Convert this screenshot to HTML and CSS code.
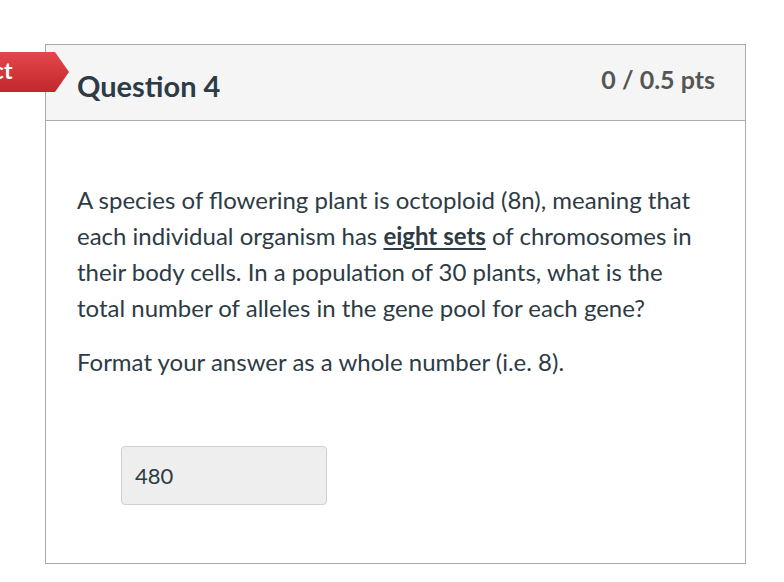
FILE: index.html
```html
<!DOCTYPE html>
<html>
<head>
<meta charset="utf-8">
<link rel="stylesheet" href="styles.css">
</head>
<body>
<div class="page">
  <div class="badge">Incorrect</div>
  <div class="card">
    <div class="card-header">
      <h2 class="title">Question 4</h2>
      <div class="pts">0 / 0.5 pts</div>
    </div>
    <div class="card-body">
      <p class="q">A species of flowering plant is octoploid (8n), meaning that each individual organism has <strong class="u">eight sets</strong> of chromosomes in their body cells. In a population of 30 plants, what is the total number of alleles in the gene pool for each gene?</p>
      <p class="q last">Format your answer as a whole number (i.e. 8).</p>
      <div class="answer">480</div>
    </div>
  </div>
</div>
</body>
</html>
```
FILE: styles.css
```css
html, body {
  margin: 0;
  padding: 0;
  background: #ffffff;
}
body {
  font-family: Lato, "Open Sans", sans-serif;
  color: #2d3b45;
}
.page {
  position: relative;
  padding: 44px 0 0 45px;
}
.card {
  width: 699px;
  height: 518px;
  border: 1px solid #ababab;
  box-sizing: content-box;
}
.card-header {
  height: 75px;
  background: #f5f5f5;
  border-bottom: 1px solid #ababab;
  display: flex;
  justify-content: space-between;
  align-items: center;
  padding: 0 30px 0 31px;
}
.title {
  margin: 0;
  font-size: 29px;
  font-weight: 700;
  color: #2d3b45;
  padding-top: 5px;
}
.pts {
  font-size: 25px;
  font-weight: 700;
  color: #555555;
  padding-bottom: 7px;
}
.card-body {
  padding: 61px 31px 0 31px;
}
.q {
  margin: 0 0 18px 0;
  font-size: 24px;
  line-height: 36px;
}
.q.last {
  margin-bottom: 0;
}
.u {
  text-decoration: underline;
  text-decoration-thickness: 2px;
  text-underline-offset: 3px;
}
.answer {
  margin: 66px 0 0 44px;
  width: 191px;
  height: 57px;
  background: #eeeeee;
  border: 1px solid #d0d0d0;
  border-radius: 4px;
  font-size: 22px;
  line-height: 57px;
  padding-left: 13px;
  color: #2d3b45;
}
.badge {
  position: absolute;
  top: 52px;
  left: -80px;
  width: 149px;
  height: 40px;
  background: linear-gradient(#e5474b, #c1272d);
  color: #fff;
  font-size: 23px;
  font-weight: 700;
  line-height: 36px;
  text-align: right;
  padding-right: 59px;
  box-sizing: border-box;
  white-space: nowrap;
  clip-path: polygon(0 0, 135px 0, 149px 50%, 135px 100%, 0 100%);
}
```
